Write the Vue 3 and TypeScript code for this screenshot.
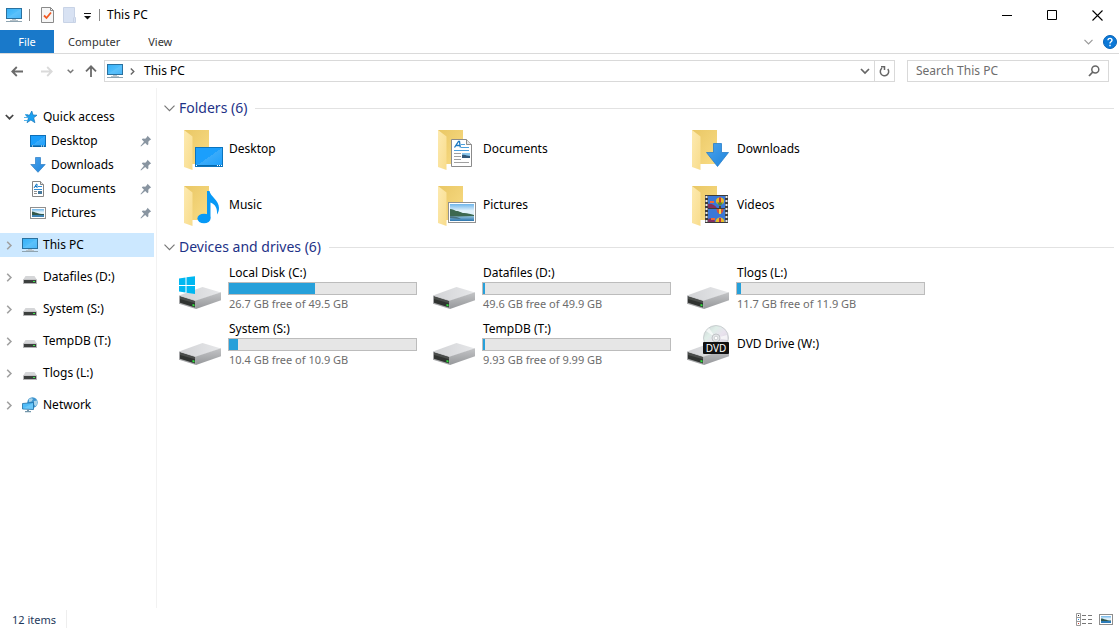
<script setup lang="ts">
import { ref } from 'vue'

interface QuickItem { name: string; icon: string }
interface TreeItem { name: string; icon: string; active?: boolean }
interface Drive { name: string; icon: string; detail?: string; used?: number }

const quickItems: QuickItem[] = [
  { name: 'Desktop', icon: 's-desktop' },
  { name: 'Downloads', icon: 's-downloads' },
  { name: 'Documents', icon: 's-documents' },
  { name: 'Pictures', icon: 's-pictures' },
]

const treeItems: TreeItem[] = [
  { name: 'This PC', icon: 's-pc', active: true },
  { name: 'Datafiles (D:)', icon: 's-drive' },
  { name: 'System (S:)', icon: 's-drive' },
  { name: 'TempDB (T:)', icon: 's-drive' },
  { name: 'Tlogs (L:)', icon: 's-drive' },
  { name: 'Network', icon: 's-network' },
]

const folders: string[] = ['Desktop', 'Documents', 'Downloads', 'Music', 'Pictures', 'Videos']

const drives: Drive[] = [
  { name: 'Local Disk (C:)', icon: 'l-system', detail: '26.7 GB free of 49.5 GB', used: 46 },
  { name: 'Datafiles (D:)', icon: 'l-drive', detail: '49.6 GB free of 49.9 GB', used: 1 },
  { name: 'Tlogs (L:)', icon: 'l-drive', detail: '11.7 GB free of 11.9 GB', used: 2 },
  { name: 'System (S:)', icon: 'l-drive', detail: '10.4 GB free of 10.9 GB', used: 5 },
  { name: 'TempDB (T:)', icon: 'l-drive', detail: '9.93 GB free of 9.99 GB', used: 1 },
  { name: 'DVD Drive (W:)', icon: 'l-dvd' },
]

const query = ref('')
</script>

<template>
  <div class="window">
    <svg class="sprite" aria-hidden="true">
      <defs>
        <linearGradient id="g-screen" x1="0" y1="0" x2="1" y2="1">
          <stop offset="0" stop-color="#35b0f7" /><stop offset="0.5" stop-color="#4fbdfb" /><stop offset="1" stop-color="#2aa5f3" />
        </linearGradient>
        <linearGradient id="g-desk" x1="0" y1="0" x2="1" y2="1">
          <stop offset="0.5" stop-color="#1b9ffc" /><stop offset="0.5" stop-color="#3aabfa" /><stop offset="1" stop-color="#1b9ffc" />
        </linearGradient>
        <linearGradient id="g-back" x1="0" y1="0" x2="1" y2="1">
          <stop offset="0" stop-color="#e9c765" /><stop offset="1" stop-color="#f9dc85" />
        </linearGradient>
        <linearGradient id="g-flap" x1="0" y1="0" x2="1" y2="1">
          <stop offset="0" stop-color="#fdeab0" /><stop offset="1" stop-color="#f8dc8c" />
        </linearGradient>
        <linearGradient id="g-arrow" x1="0" y1="0" x2="1" y2="1">
          <stop offset="0" stop-color="#4ba3ec" /><stop offset="1" stop-color="#1e84dc" />
        </linearGradient>
        <linearGradient id="g-top" x1="0" y1="0" x2="1" y2="0">
          <stop offset="0" stop-color="#d2d3d6" /><stop offset="1" stop-color="#e6e7e9" />
        </linearGradient>
        <linearGradient id="g-side" x1="0" y1="0" x2="0" y2="1">
          <stop offset="0" stop-color="#c3c4c6" /><stop offset="1" stop-color="#96989b" />
        </linearGradient>
        <linearGradient id="g-sky" x1="0" y1="0" x2="0" y2="1">
          <stop offset="0" stop-color="#6eb5ea" /><stop offset="0.4" stop-color="#e4f3fb" /><stop offset="1" stop-color="#cfe8f5" />
        </linearGradient>
        <linearGradient id="g-water" x1="0" y1="0" x2="0" y2="1">
          <stop offset="0" stop-color="#a9d3e6" /><stop offset="1" stop-color="#2b74ac" />
        </linearGradient>
        <linearGradient id="g-disc" x1="0" y1="0" x2="1" y2="1">
          <stop offset="0" stop-color="#c9cdd0" /><stop offset="0.3" stop-color="#dfeee8" /><stop offset="0.55" stop-color="#e9e2ee" /><stop offset="1" stop-color="#c4cacd" />
        </linearGradient>

        <symbol id="s-pc" viewBox="0 0 16 16">
          <rect x="0.5" y="1.5" width="15" height="10" fill="url(#g-screen)" stroke="#2a719f" />
          <path d="M1 11 15 2v9z" fill="#6fcafd" opacity=".45" />
          <path d="M6 12h4v1h2v1H4v-1h2z" fill="#b9c4cb" />
          <path d="M0 14.5h16" stroke="#8ea4b1" />
        </symbol>
        <symbol id="s-desktop" viewBox="0 0 16 16">
          <rect x="0.5" y="2.5" width="15" height="11" fill="url(#g-desk)" stroke="#0d6fb8" />
          <path d="M1 13h14" stroke="#075a96" />
          <path d="M2 13h1M11 13h1M13 13h1" stroke="#fff" />
        </symbol>
        <symbol id="s-downloads" viewBox="0 0 16 16">
          <path d="M5.5.5h5v7h4.700L8 15.300.8 7.500h4.700z" fill="url(#g-arrow)" stroke="#2b7cc4" stroke-width=".7" />
        </symbol>
        <symbol id="s-documents" viewBox="0 0 16 16">
          <path d="M2.500.5h8l3 3v12h-11z" fill="#fff" stroke="#858585" />
          <path d="M10.500.5v3h3" fill="#e5e5e5" stroke="#858585" />
          <path d="m4 7 2.500-4h.5v4M5 5.500h2" fill="none" stroke="#1678c4" />
          <path d="M8 5.500h4M4 8.500h8" stroke="#2f8dd6" />
          <path d="M4 10.500h3M4 12.500h3" stroke="#909090" />
          <path d="M8 10h4v3H8z" fill="#46799d" />
        </symbol>
        <symbol id="s-pictures" viewBox="0 0 16 16">
          <rect x="0.5" y="2.500" width="15" height="11" fill="#fff" stroke="#8f8f8f" />
          <rect x="2" y="4" width="12" height="8" fill="url(#g-sky)" />
          <path d="M2 6.500c3 .2 5 2.500 12 2.500v1H2z" fill="#32584b" />
          <path d="M2 10h12v2H2z" fill="#3d82b3" />
        </symbol>
        <symbol id="s-drive" viewBox="0 0 16 16">
          <path d="M3.500 7h9L15 11H1z" fill="#d5d6d8" />
          <path d="M1 10.500h14V15H1z" fill="#b5b5b6" />
          <path d="M2 11h12v3H2z" fill="#3c3f3e" />
          <path d="M11 12h2v1h-2z" fill="#3eea4b" />
        </symbol>
        <symbol id="s-network" viewBox="0 0 16 16">
          <circle cx="10.500" cy="5.500" r="5.200" fill="#3f95cf" />
          <path d="M7 2c2-1 3-1 4 0L9.500 4.500 7 5zM12 4l3-.5.5 3-2 3-1.500-2z" fill="#a9d3e9" />
          <path d="m.5 6.500 11-1v7l-11-.5z" fill="#4fbcf8" stroke="#1f6fa5" stroke-width=".8" />
          <path d="m1 11.500 10-5.500v6z" fill="#86d3fc" opacity=".5" />
          <path d="M5 12.500h2v1.500h2v1.200H3V14h2z" fill="#7496aa" />
        </symbol>
        <symbol id="s-star" viewBox="0 0 16 16">
          <path d="m9.800 2 1.200 4 4 .2-3.300 2.600 1.200 4.900-4-2.700-3.900 2.700 1.500-4.900-2.800-2.500 4-.3z" fill="#1ba1f2" stroke="#1674b8" stroke-width=".7" />
          <path d="M3 5.500h3M2 8.500h4M2 11.500h4" stroke="#42acea" stroke-width=".9" />
        </symbol>
        <symbol id="s-pin" viewBox="0 0 12 12">
          <path d="m7.500.8 3.700 3.700-1.200.5-1.700 1.700.1 2.500-1 1-2.200-2.200L1 11.500.5 11l3.500-4.200L1.800 4.600l1-1 2.500.1L7 2z" fill="#8995a1" />
        </symbol>

        <symbol id="l-folder" viewBox="0 0 48 48">
          <path d="M5 5h25v34H10z" fill="url(#g-back)" />
          <path d="m5 5 8.500 6.500V45L5 42z" fill="url(#g-flap)" />
        </symbol>
        <symbol id="l-Desktop" viewBox="0 0 48 48">
          <rect x="16.500" y="22.500" width="27" height="19" fill="url(#g-desk)" stroke="#0b74be" />
          <path d="M17 40.500h26" stroke="#0569ad" />
          <path d="M17 40.500h1M38 40.500h1M40 40.500h1M42 40.500h1" stroke="#fff" />
        </symbol>
        <symbol id="l-Documents" viewBox="0 0 48 48">
          <path d="M18.500 14.500h15l5 5v22h-20z" fill="#fff" stroke="#8b8b8b" />
          <path d="M33.500 14.500v5h5" fill="#e6e6e6" stroke="#8b8b8b" />
          <path d="m21.500 22.500 4-6h1l.8 6M23 20.500h4" fill="none" stroke="#1c78c1" stroke-width="1.300" />
          <path d="M28 19.500h4M28 22.500h8M21 25.500h15" stroke="#4ca0dd" />
          <path d="M21 28.500h7M21 31.500h7M21 34.500h7M21 37.500h15" stroke="#a0a0a0" />
          <path d="M29 28h8v5h-8z" fill="#8cc7ed" />
          <path d="M29 30c3-1 5 1 8 1v2h-8z" fill="#31587a" />
        </symbol>
        <symbol id="l-Downloads" viewBox="0 0 48 48">
          <path d="M26.500 18.500h8v9h7L30.500 41.500l-11-14h7z" fill="url(#g-arrow)" stroke="#277dca" stroke-width=".8" />
        </symbol>
        <symbol id="l-Music" viewBox="0 0 48 48">
          <ellipse cx="25" cy="37.500" rx="6.600" ry="4.800" fill="#0799f6" />
          <path d="M28 10h2.500c.5 5 9.500 9 9.500 17 0 3-1 5-2 6.500.5-7-2-10-6.500-12V37H28z" fill="#0799f6" />
        </symbol>
        <symbol id="l-Pictures" viewBox="0 0 48 48">
          <rect x="15.500" y="21.500" width="27" height="20" fill="#fff" stroke="#919191" />
          <rect x="17" y="23" width="24" height="17" fill="url(#g-sky)" />
          <path d="M17 34h24v6H17z" fill="url(#g-water)" />
          <path d="M17 28c3 0 4 1 6 2 4 0 5 2 8 2 4 0 6 1 10 2v1c-8 0-15 1-24 0z" fill="#3d6850" />
          <path d="M17 35c4 0 8 1 11 3l-11-1z" fill="#294d50" opacity=".6" />
        </symbol>
        <symbol id="l-Videos" viewBox="0 0 48 48">
          <path d="M18 14h23v28H18z" fill="#3b3b3b" />
          <path d="M19.500 15v27M39.500 15v27" stroke="#e9e9e9" stroke-width="2" stroke-dasharray="2 2" />
          <path d="M21 15h17v12H21zM21 28h17v13H21z" fill="#3a78d8" />
          <path d="M21 23c3-1 7 1 9 4h-9zM21 38c4-2 7 0 7 3h-7z" fill="#84305f" />
          <ellipse cx="33" cy="20" rx="4" ry="3.500" fill="#e9ba26" />
          <path d="M32 16.500h2v7h-2z" fill="#c93535" />
          <path d="M30 21.500h6l-2 3h-2z" fill="#4d8a3c" />
          <path d="M32 25h2v2h-2z" fill="#653820" />
          <path d="M29.500 28h7c0 3-2 5-3.500 5s-3.500-2-3.500-5z" fill="#cf5341" />
          <path d="M32 28h2v5h-2z" fill="#f1d63c" />
          <path d="M28.500 41c0-6 9-6 9 0z" fill="#e8bd27" />
          <path d="M32 37h2v4h-2z" fill="#bd2f4f" />
          <path d="M23 20h4v2h-4zM24 37h4v2h-4z" fill="#ed6935" />
        </symbol>
        <symbol id="l-drive" viewBox="0 0 48 48">
          <path d="m0 31.500 23.500-8.500L42 28.500 17 37z" fill="url(#g-top)" />
          <path d="m17 36.500 25-8.200v8L17 45z" fill="url(#g-side)" />
          <path d="m0 31.500 17 5.200V45L0 39.800z" fill="#a5a6a8" />
          <path d="m1 32.500 15 4.700v6.300L1 38.800z" fill="#303331" />
          <path d="m1 32.500 15 4.700v2L1 35z" fill="#4a4d4b" />
          <path d="m13.500 40 2 .5v2l-2-.6z" fill="#2fe53c" />
        </symbol>
        <symbol id="l-system" viewBox="0 0 48 48">
          <use href="#l-drive" />
          <path d="m0 14.500 6.500-1v7.500H0zM7.500 13.300 16 12.200V21H7.500zM0 22h6.500v6.500L0 27.500zM7.500 22H16v8l-8.500-1.200z" fill="#00b7f1" />
        </symbol>
        <symbol id="l-dvd" viewBox="0 0 48 48">
          <use href="#l-drive" />
          <circle cx="29" cy="18" r="12.500" fill="url(#g-disc)" stroke="#c0c5c8" stroke-width=".8" />
          <path d="M29 18 19 11l3-3zM29 18l11-3 .5 5z" fill="#fff" opacity=".65" />
          <circle cx="29" cy="18" r="4" fill="#e4e7e9" stroke="#b7bbbe" stroke-width=".8" />
          <circle cx="29" cy="18" r="1.800" fill="#fff" stroke="#b7bbbe" stroke-width=".6" />
          <rect x="16" y="22" width="26" height="12" rx="1" fill="#111" />
          <text x="29" y="31.500" text-anchor="middle" font-size="10" fill="#fff">DVD</text>
        </symbol>
      </defs>
    </svg>

    <header class="titlebar">
      <svg class="icon16"><use href="#s-pc" /></svg>
      <span class="sep"></span>
      <button class="quick" aria-label="Properties">
        <svg width="13" height="16" viewBox="0 0 13 16">
          <path d="M.5.5h9l3 3v12H.5z" fill="#f6f6f6" stroke="#8a8a8a" />
          <path d="M9.500.5v3h3" fill="none" stroke="#8a8a8a" />
          <path d="m3 8.500 2.500 2.500L10 5.500" fill="none" stroke="#f15a24" stroke-width="1.800" />
        </svg>
      </button>
      <button class="quick" aria-label="New folder">
        <svg width="13" height="16" viewBox="0 0 13 16">
          <path d="M.5.500h11v10h1v5H.5z" fill="#d8e2f3" stroke="#c8d3e6" />
          <path d="M10.500 10.500v5" stroke="#c8d3e6" />
        </svg>
      </button>
      <button class="quick more" aria-label="Customize Quick Access Toolbar">
        <svg width="7" height="7" viewBox="0 0 7 7"><path d="M0 .5h7" stroke="#111" /><path d="M0 3h7L3.500 6.500z" fill="#111" /></svg>
      </button>
      <span class="sep"></span>
      <h1>This PC</h1>
      <div class="controls">
        <button aria-label="Minimize"><svg width="11" height="11"><path d="M0 5.500h10" stroke="#000" /></svg></button>
        <button aria-label="Maximize"><svg width="11" height="11"><path d="M.5.500h9v9h-9z" fill="none" stroke="#000" /></svg></button>
        <button aria-label="Close"><svg width="11" height="11"><path d="m.5.500 10 10M10.500.500l-10 10" stroke="#000" stroke-width="1.100" /></svg></button>
      </div>
    </header>

    <nav class="tabs" aria-label="Ribbon">
      <button class="file">File</button>
      <button>Computer</button>
      <button>View</button>
      <button class="ribbon-toggle" aria-label="Expand the Ribbon">
        <svg width="9" height="6"><path d="m.5.800 4 4 4-4" fill="none" stroke="#999" stroke-width="1.200" /></svg>
      </button>
      <button class="help" aria-label="Help">
        <svg width="14" height="14">
          <circle cx="7" cy="7" r="6.500" fill="#0b78d7" stroke="#0862b5" />
          <path d="M5 5.300C5 2.600 9 2.800 9 5.200c0 1.500-2 1.600-2 3.200M7 9.700v1.500" fill="none" stroke="#fff" stroke-width="1.400" />
        </svg>
      </button>
    </nav>

    <div class="navrow">
      <button class="back" aria-label="Back"><svg width="12" height="11"><path d="M12 5.500H1.500M5.800 1 1.300 5.500l4.500 4.500" fill="none" stroke="#6b6b6b" stroke-width="1.800" /></svg></button>
      <button class="forward" aria-label="Forward"><svg width="12" height="11"><path d="M0 5.500h10.500M6.200 1l4.500 4.500-4.500 4.500" fill="none" stroke="#dadada" stroke-width="1.800" /></svg></button>
      <button class="recent" aria-label="Recent locations"><svg width="7" height="5"><path d="m.7.700 2.800 2.800L6.300.700" fill="none" stroke="#777" stroke-width="1.500" /></svg></button>
      <button class="up" aria-label="Up"><svg width="12" height="12"><path d="M6 12V1.500M1 6.300l5-5 5 5" fill="none" stroke="#6b6b6b" stroke-width="1.800" /></svg></button>
      <div class="address">
        <svg class="icon16"><use href="#s-pc" /></svg>
        <svg class="crumb" width="5" height="7"><path d="m.8.500 3 3-3 3" fill="none" stroke="#666" stroke-width="1.400" /></svg>
        <a href="#">This PC</a>
        <button class="drop" aria-label="Previous locations"><svg width="10" height="7"><path d="m1 1 4 4 4-4" fill="none" stroke="#666" stroke-width="1.700" /></svg></button>
        <button class="refresh" aria-label="Refresh">
          <svg width="11" height="12"><path d="M3 3.200A4.200 4.200 0 1 0 8.800 4M2 1.700h3.500V5" fill="none" stroke="#666" stroke-width="1.500" /></svg>
        </button>
      </div>
      <label class="search">
        <input v-model="query" type="text" placeholder="Search This PC" aria-label="Search This PC" />
        <svg width="12" height="12"><circle cx="7.300" cy="4.500" r="3.500" fill="none" stroke="#666" stroke-width="1.500" /><path d="M4.800 7 1 11" stroke="#666" stroke-width="1.800" /></svg>
      </label>
    </div>

    <div class="body">
      <nav class="tree" aria-label="Navigation pane">
        <div class="row">
          <button class="twist" aria-label="Collapse Quick access"><svg width="9" height="7"><path d="m.8 1 3.700 3.700L8.200 1" fill="none" stroke="#444" stroke-width="1.700" /></svg></button>
          <svg class="icon16"><use href="#s-star" /></svg>
          <a href="#">Quick access</a>
        </div>
        <div v-for="q in quickItems" :key="q.name" class="row child">
          <svg class="icon16"><use :href="'#' + q.icon" /></svg>
          <a href="#">{{ q.name }}</a>
          <svg class="pin"><use href="#s-pin" /></svg>
        </div>
        <div v-for="t in treeItems" :key="t.name" class="row top" :class="{ active: t.active }">
          <button class="twist" :aria-label="'Expand ' + t.name"><svg width="7" height="9"><path d="m1.200.800 3.700 3.700-3.700 3.700" fill="none" stroke="#a0a0a0" stroke-width="1.600" /></svg></button>
          <svg class="icon16"><use :href="'#' + t.icon" /></svg>
          <a href="#">{{ t.name }}</a>
        </div>
      </nav>

      <main>
        <section>
          <h2>
            <button aria-label="Collapse Folders"><svg width="11" height="7"><path d="m.5.700 5 5 5-5" fill="none" stroke="#777" stroke-width="1.200" /></svg></button>
            Folders (6)
          </h2>
          <ul>
            <li v-for="f in folders" :key="f">
              <svg class="icon48"><use href="#l-folder" /><use :href="'#l-' + f" /></svg>
              <a href="#" class="info">{{ f }}</a>
            </li>
          </ul>
        </section>
        <section>
          <h2>
            <button aria-label="Collapse Devices and drives"><svg width="11" height="7"><path d="m.5.700 5 5 5-5" fill="none" stroke="#777" stroke-width="1.200" /></svg></button>
            Devices and drives (6)
          </h2>
          <ul>
            <li v-for="d in drives" :key="d.name">
              <svg class="icon48"><use :href="'#' + d.icon" /></svg>
              <a href="#" class="info">
                <span>{{ d.name }}</span>
                <span v-if="d.detail" class="bar" role="meter" :aria-label="d.name + ' used space'" :aria-valuenow="d.used" aria-valuemin="0" aria-valuemax="100">
                  <span class="fill" :style="{ width: d.used + '%' }"></span>
                </span>
                <span v-if="d.detail" class="detail">{{ d.detail }}</span>
              </a>
            </li>
          </ul>
        </section>
      </main>
    </div>

    <footer>
      <span class="count">12 items</span>
      <button aria-label="Details view">
        <svg width="16" height="13">
          <path d="M.5.500h4v12h-4zM.5 4.500h4M.5 8.500h4" fill="none" stroke="#999" />
          <path d="M2 2.500h1" stroke="#333" /><path d="M2 6.500h1" stroke="#268de0" /><path d="M2 10.500h1" stroke="#d23b2f" />
          <path d="M6 2.500h4M12 2.500h4M6 6.500h4M12 6.500h4M6 10.500h4M12 10.500h4" stroke="#777" />
        </svg>
      </button>
      <button aria-label="Large icons view">
        <svg width="14" height="11">
          <rect x="0.500" y="0.500" width="13" height="10" fill="#fff" stroke="#8d8d8d" />
          <rect x="2" y="2" width="10" height="7" fill="url(#g-sky)" />
          <path d="M2 4.500c3 0 5 2 10 2v1H2z" fill="#32584b" /><path d="M2 7h10v2H2z" fill="#2c7cba" />
        </svg>
      </button>
    </footer>
  </div>
</template>

<style>
html, body { margin: 0; background: #fff; }
</style>

<style scoped>
.window {
  min-height: 100vh;
  display: flex;
  flex-direction: column;
  background: #fff;
  color: #000;
  font-family: "Segoe UI", "Noto Sans", "Open Sans", sans-serif;
  font-size: 12px;
  line-height: 16px;
}
.sprite { position: absolute; width: 0; height: 0; }
svg { display: block; flex: none; }
button {
  display: flex;
  align-items: center;
  justify-content: center;
  padding: 0;
  border: 0;
  background: none;
  color: inherit;
  font: inherit;
}
a { color: inherit; text-decoration: none; white-space: nowrap; }
h1, h2 { margin: 0; font-weight: 400; }
ul { margin: 0; padding: 0; list-style: none; }
.icon16 { width: 16px; height: 16px; }
.icon48 { width: 48px; height: 48px; }

.titlebar { display: flex; align-items: center; height: 30px; padding-left: 6px; }
.sep { width: 1px; height: 12px; margin: 0 7px; background: #8a8a8a; }
.quick { margin-left: 4px; }
.quick + .quick { margin-left: 9px; }
.quick.more { margin: 2px 1px 0 8px; }
h1 { font-size: 12px; }
.controls { display: flex; align-self: stretch; margin-left: auto; }
.controls button { width: 45px; padding-left: 2px; }

.tabs { display: flex; height: 23px; border-bottom: 1px solid #dadada; color: #333; font-size: 11px; }
.tabs button { padding: 0 14px; }
.tabs .file { width: 54px; padding: 0; background: #1979ca; color: #fff; }
.tabs .ribbon-toggle { margin-left: auto; padding: 0 10px; }
.tabs .help { padding: 0 2px 0 0; }

.navrow { display: flex; align-items: center; height: 34px; padding: 0 10px; }
.back { width: 14px; }
.forward { width: 14px; margin-left: 16px; }
.recent { width: 14px; margin-left: 9px; }
.up { width: 14px; margin-left: 7px; }
.address {
  flex: 1;
  display: flex;
  align-items: center;
  height: 20px;
  margin: 0 12px 0 6px;
  padding-left: 2px;
  border: 1px solid #d9d9d9;
}
.crumb { margin: 0 9px 0 7px; }
.drop { width: 18px; margin-left: auto; }
.refresh { align-self: stretch; width: 20px; border-left: 1px solid #d9d9d9; }
.search {
  display: flex;
  align-items: center;
  width: 200px;
  height: 20px;
  border: 1px solid #d9d9d9;
}
.search input {
  flex: 1;
  min-width: 0;
  padding: 0 8px;
  border: 0;
  outline: 0;
  background: none;
  color: #000;
  font: inherit;
}
.search input::placeholder { color: #6d6d6d; opacity: 1; }
.search svg { margin-right: 8px; }

.body { flex: 1; display: flex; }
.tree { flex: none; width: 156px; padding-top: 17px; border-right: 1px solid #f2f2f2; }
.row { display: flex; align-items: center; height: 24px; margin-right: 2px; }
.row.child { padding: 0 2px 0 30px; }
.row.top { margin-top: 8px; }
.row.active { background: #cce8ff; }
.twist { width: 18px; margin-right: 4px; }
.row a { margin-left: 5px; }
.pin { width: 12px; height: 12px; margin-left: auto; }

main { flex: 1; padding: 8px 5px 0 7px; }
h2 { display: flex; align-items: center; gap: 4px; height: 24px; color: #1e3287; font-size: 14px; white-space: nowrap; }
h2::after { content: ""; flex: 1; height: 1px; margin-left: 4px; background: #e2e2e2; }
ul { display: grid; grid-template-columns: repeat(auto-fill, 254px); margin-top: 1px; padding-left: 15px; }
section + section { margin-top: 2px; }
li { display: flex; align-items: center; height: 56px; }
.info { display: flex; flex-direction: column; width: 188px; margin-left: 2px; }
.bar { display: flex; height: 11px; margin: 1px 0 1px -1px; border: 1px solid #bcbcbc; background: #e6e6e6; }
.fill { background: #26a0da; }
.detail { color: #6d6d6d; font-size: 11px; }

footer { display: flex; align-items: center; height: 22px; padding: 0 6px 0 12px; color: #1e395b; font-size: 11px; }
.count { margin-right: auto; padding: 2px 10px 0 0; border-right: 1px solid #eee; }
footer button + button { margin-left: 7px; }
</style>
